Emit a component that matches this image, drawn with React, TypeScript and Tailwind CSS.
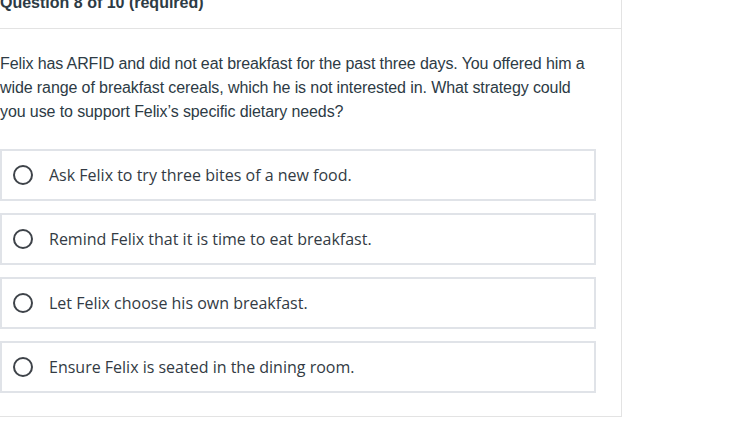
import React, { useState } from 'react';

const OPTIONS = [
  'Ask Felix to try three bites of a new food.',
  'Remind Felix that it is time to eat breakfast.',
  'Let Felix choose his own breakfast.',
  'Ensure Felix is seated in the dining room.',
];

const App = () => {
  const [picked, setPicked] = useState<number | null>(null);

  return (
    <div className="w-[736px] h-[421px] overflow-hidden bg-white">
      <div className="ml-[-21px] mt-[-17px] w-[643px] border border-[#e3e3e3] bg-white">
        {/* Header */}
        <div className="h-[45px] border-b border-[#e3e3e3] pl-[20px] pt-[7px]">
          <h2 className="text-[16px] leading-[24px] font-bold text-[#2d3b45] font-['Liberation_Sans',Arial,sans-serif]">
            Question 8 of 10 (required)
          </h2>
        </div>

        {/* Body */}
        <div className="pl-[20px] pr-[25px] pt-[23px] pb-[23px]">
          <p className="text-[16px] leading-[24px] text-[#2d3b45] font-['Liberation_Sans',Arial,sans-serif] tracking-[-0.1px]">
            Felix has ARFID and did not eat breakfast for the past three days. You offered him a wide range of breakfast
            cereals, which he is not interested in. What strategy could you use to support Felix’s specific dietary needs?
          </p>

          <div className="mt-[25px] flex flex-col gap-[12px]">
            {OPTIONS.map((opt, i) => (
              <label
                key={i}
                onClick={() => setPicked(i)}
                className="h-[52px] border-2 border-[#e0e3e8] flex items-center pl-[11px] cursor-pointer"
              >
                <span className="w-[20px] h-[20px] rounded-full border-[2.5px] border-[#3e4349] flex items-center justify-center shrink-0">
                  {picked === i && <span className="w-[10px] h-[10px] rounded-full bg-[#3e4349]" />}
                </span>
                <span className="ml-[16px] text-[16px] text-[#333b44] font-['Open_Sans',sans-serif]">{opt}</span>
              </label>
            ))}
          </div>
        </div>
      </div>
    </div>
  );
};

export default App;
